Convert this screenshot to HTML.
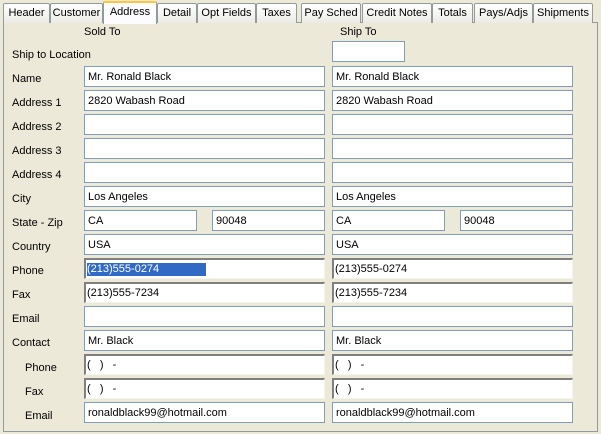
<!DOCTYPE html>
<html><head><style>
*{box-sizing:border-box;margin:0;padding:0}
body{width:601px;height:434px;background:#ECE9D8;font-family:"Liberation Sans",sans-serif;font-size:11px;color:#000;position:relative;overflow:hidden}
.tab{position:absolute;top:3px;height:20px;border:1px solid #919B9C;border-bottom:none;background:linear-gradient(#fff,#ECEBE6);text-align:center;line-height:18px;border-radius:2px 2px 0 0}
.tab.act{top:1px;height:23px;background:#FCFCFE;border-top:2px solid #FFC83C;line-height:18px;z-index:2}
.panel{position:absolute;left:3px;top:22px;width:595px;height:410px;border:1px solid #919B9C;background:#ECE9D8}
.l{position:absolute;left:12px}
.s{position:absolute;left:25px}
.f{position:absolute;height:21px;border:1px solid #7F9DB9;background:#fff;padding-left:3px;line-height:20px;white-space:nowrap}
.f.k{border-top:2px solid #808080;border-left:2px solid #808080;border-right:1px solid #F5F5F0;border-bottom:1px solid #F5F5F0;padding-left:1px;line-height:19px}
.sel{background:#316AC5;color:#fff;display:inline-block;width:119px;line-height:13px}
</style></head><body>
<div class="panel"></div>
<div class="tab" style="left:3px;width:47px">Header</div>
<div class="tab" style="left:50px;width:53px">Customer</div>
<div class="tab act" style="left:103px;width:54px">Address</div>
<div class="tab" style="left:157px;width:40px">Detail</div>
<div class="tab" style="left:197px;width:59px">Opt Fields</div>
<div class="tab" style="left:256px;width:41px">Taxes</div>
<div class="tab" style="left:301px;width:60px">Pay Sched</div>
<div class="tab" style="left:362px;width:70px">Credit Notes</div>
<div class="tab" style="left:432px;width:41px">Totals</div>
<div class="tab" style="left:474px;width:59px">Pays/Adjs</div>
<div class="tab" style="left:533px;width:60px">Shipments</div>

<div style="position:absolute;left:84px;top:26px">Sold To</div>
<div style="position:absolute;left:340px;top:26px">Ship To</div>
<div class="l" style="top:49px">Ship to Location</div>
<div class="f" style="left:332px;top:41px;width:73px"></div>

<div class="l" style="top:73px">Name</div>
<div class="l" style="top:97px">Address 1</div>
<div class="l" style="top:121px">Address 2</div>
<div class="l" style="top:145px">Address 3</div>
<div class="l" style="top:169px">Address 4</div>
<div class="l" style="top:193px">City</div>
<div class="l" style="top:217px">State - Zip</div>
<div class="l" style="top:241px">Country</div>
<div class="l" style="top:265px">Phone</div>
<div class="l" style="top:289px">Fax</div>
<div class="l" style="top:313px">Email</div>
<div class="l" style="top:337px">Contact</div>
<div class="s" style="top:362px">Phone</div>
<div class="s" style="top:386px">Fax</div>
<div class="s" style="top:410px">Email</div>

<div class="f" style="left:84px;top:66px;width:241px">Mr. Ronald Black</div>
<div class="f" style="left:332px;top:66px;width:241px">Mr. Ronald Black</div>
<div class="f" style="left:84px;top:90px;width:241px">2820 Wabash Road</div>
<div class="f" style="left:332px;top:90px;width:241px">2820 Wabash Road</div>
<div class="f" style="left:84px;top:114px;width:241px"></div>
<div class="f" style="left:332px;top:114px;width:241px"></div>
<div class="f" style="left:84px;top:138px;width:241px"></div>
<div class="f" style="left:332px;top:138px;width:241px"></div>
<div class="f" style="left:84px;top:162px;width:241px"></div>
<div class="f" style="left:332px;top:162px;width:241px"></div>
<div class="f" style="left:84px;top:186px;width:241px">Los Angeles</div>
<div class="f" style="left:332px;top:186px;width:241px">Los Angeles</div>
<div class="f" style="left:84px;top:210px;width:113px">CA</div>
<div class="f" style="left:212px;top:210px;width:113px">90048</div>
<div class="f" style="left:332px;top:210px;width:113px">CA</div>
<div class="f" style="left:460px;top:210px;width:113px">90048</div>
<div class="f" style="left:84px;top:234px;width:241px">USA</div>
<div class="f" style="left:332px;top:234px;width:241px">USA</div>
<div class="f k" style="left:84px;top:258px;width:241px"><span class="sel">(213)555-0274</span></div>
<div class="f k" style="left:332px;top:258px;width:241px">(213)555-0274</div>
<div class="f k" style="left:84px;top:282px;width:241px">(213)555-7234</div>
<div class="f k" style="left:332px;top:282px;width:241px">(213)555-7234</div>
<div class="f" style="left:84px;top:306px;width:241px"></div>
<div class="f" style="left:332px;top:306px;width:241px"></div>
<div class="f" style="left:84px;top:330px;width:241px">Mr. Black</div>
<div class="f" style="left:332px;top:330px;width:241px">Mr. Black</div>
<div class="f k" style="left:84px;top:354px;width:241px">(&nbsp;&nbsp;&nbsp;)&nbsp;&nbsp;&nbsp;-</div>
<div class="f k" style="left:332px;top:354px;width:241px">(&nbsp;&nbsp;&nbsp;)&nbsp;&nbsp;&nbsp;-</div>
<div class="f k" style="left:84px;top:378px;width:241px">(&nbsp;&nbsp;&nbsp;)&nbsp;&nbsp;&nbsp;-</div>
<div class="f k" style="left:332px;top:378px;width:241px">(&nbsp;&nbsp;&nbsp;)&nbsp;&nbsp;&nbsp;-</div>
<div class="f" style="left:84px;top:402px;width:241px">ronaldblack99@hotmail.com</div>
<div class="f" style="left:332px;top:402px;width:241px">ronaldblack99@hotmail.com</div>
</body></html>
